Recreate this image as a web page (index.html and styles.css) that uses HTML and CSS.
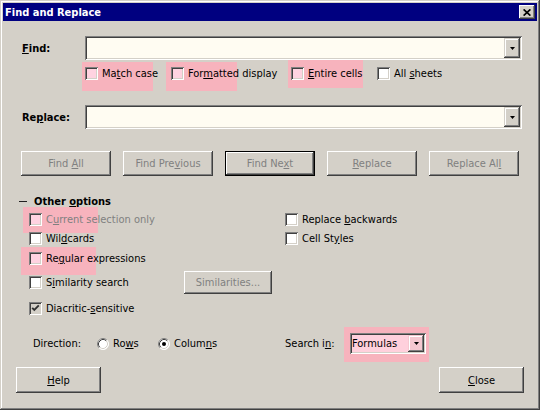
FILE: index.html
```html
<!DOCTYPE html>
<html>
<head>
<meta charset="utf-8">
<title>Find and Replace</title>
<link rel="stylesheet" href="styles.css">
</head>
<body>
<div class="window">
  <div class="titlebar">
    <span class="title">Find and Replace</span>
    <span class="tb-btn"><svg width="8" height="7" viewBox="0 0 8 7"><path d="M0.6 0.4 L7.4 6.6 M7.4 0.4 L0.6 6.6" stroke="#000" stroke-width="1.7" fill="none"/></svg></span>
  </div>
  <div class="content">
    <div class="field-row find-row">
      <span class="field-label"><u>F</u>ind:</span>
      <div class="combo"><span class="dd"><svg width="5" height="3" viewBox="0 0 5 3"><polygon points="0,0 5,0 2.5,3" fill="#000"/></svg></span></div>
    </div>
    <div class="opt-row">
      <span class="cb-item w-match hl hl-match"><span class="cb pink"></span><span>Ma<u>t</u>ch case</span></span>
      <span class="cb-item w-fmt hl hl-fmt"><span class="cb pink"></span><span>For<u>m</u>atted display</span></span>
      <span class="cb-item w-entire hl hl-entire"><span class="cb pink"></span><span><u>E</u>ntire cells</span></span>
      <span class="cb-item"><span class="cb"></span><span>All <u>s</u>heets</span></span>
    </div>
    <div class="field-row replace-row">
      <span class="field-label">Re<u>p</u>lace:</span>
      <div class="combo"><span class="dd"><svg width="5" height="3" viewBox="0 0 5 3"><polygon points="0,0 5,0 2.5,3" fill="#000"/></svg></span></div>
    </div>
    <div class="btn-row">
      <span class="btn disabled"><span>Find <u>A</u>ll</span></span>
      <span class="btn disabled"><span>Find Pre<u>v</u>ious</span></span>
      <span class="btn default disabled"><span>Find Ne<u>x</u>t</span></span>
      <span class="btn disabled"><span><u>R</u>eplace</span></span>
      <span class="btn disabled"><span>Replace Al<u>l</u></span></span>
    </div>
    <div class="other-head"><span class="dash"></span><span class="head-text">Other <u>o</u>ptions</span></div>
    <div class="other-grid">
      <div class="col">
        <span class="cb-item hl hl-cur disabled"><span class="cb pink"></span><span>C<u>u</u>rrent selection only</span></span>
        <span class="cb-item r2"><span class="cb"></span><span>Wil<u>d</u>cards</span></span>
        <span class="cb-item r3 hl hl-reg"><span class="cb pink"></span><span>Re<u>g</u>ular expressions</span></span>
        <div class="sim-row">
          <span class="cb-item w-sim"><span class="cb"></span><span>S<u>i</u>milarity search</span></span>
          <span class="btn sim disabled"><span>Similarities...</span></span>
        </div>
        <span class="cb-item r5"><span class="cb checked"><svg width="13" height="13" viewBox="0 0 13 13"><path d="M3.2 5.8 L5.3 7.9 L9.8 3.4" stroke="#303030" stroke-width="1.9" fill="none"/></svg></span><span>Diacritic-<u>s</u>ensitive</span></span>
      </div>
      <div class="col">
        <span class="cb-item"><span class="cb"></span><span>Replace <u>b</u>ackwards</span></span>
        <span class="cb-item r2"><span class="cb"></span><span>Cell St<u>y</u>les</span></span>
      </div>
    </div>
    <div class="dir-row">
      <span class="dir-label">Direction:</span>
      <span class="radio-item w-rows"><svg width="12" height="12" viewBox="0 0 12 12"><circle cx="6" cy="6" r="5.5" fill="#fff"/><path d="M2.11 9.89 A5.5 5.5 0 0 1 9.89 2.11" stroke="#808080" fill="none"/><path d="M9.89 2.11 A5.5 5.5 0 0 1 2.11 9.89" stroke="#fff" fill="none"/><path d="M2.82 9.18 A4.5 4.5 0 0 1 9.18 2.82" stroke="#404040" fill="none"/><path d="M9.18 2.82 A4.5 4.5 0 0 1 2.82 9.18" stroke="#d4d0c8" fill="none"/></svg><span>Ro<u>w</u>s</span></span>
      <span class="radio-item w-cols"><svg width="12" height="12" viewBox="0 0 12 12"><circle cx="6" cy="6" r="5.5" fill="#fff"/><path d="M2.11 9.89 A5.5 5.5 0 0 1 9.89 2.11" stroke="#808080" fill="none"/><path d="M9.89 2.11 A5.5 5.5 0 0 1 2.11 9.89" stroke="#fff" fill="none"/><path d="M2.82 9.18 A4.5 4.5 0 0 1 9.18 2.82" stroke="#404040" fill="none"/><path d="M9.18 2.82 A4.5 4.5 0 0 1 2.82 9.18" stroke="#d4d0c8" fill="none"/><circle cx="6" cy="6" r="2" fill="#000"/></svg><span>Colum<u>n</u>s</span></span>
      <span class="search-label">Search i<u>n</u>:</span>
      <span class="listbox-wrap hl hl-list"><span class="listbox"><span class="lb-text">Formulas</span><span class="dd pinkdd"><svg width="5" height="3" viewBox="0 0 5 3"><polygon points="0,0 5,0 2.5,3" fill="#000"/></svg></span></span></span>
    </div>
    <div class="bottom-row">
      <span class="btn big"><span><u>H</u>elp</span></span>
      <span class="btn big"><span><u>C</u>lose</span></span>
    </div>
  </div>
</div>
</body>
</html>
```
FILE: styles.css
```css
* { box-sizing: border-box; }
html, body { margin: 0; padding: 0; }
body {
  width: 540px;
  height: 410px;
  overflow: hidden;
  background: #d4d0c8;
  font-family: "DejaVu Sans Condensed", "DejaVu Sans", sans-serif;
  font-size: 11px;
  line-height: 13px;
  color: #000;
}
u { text-decoration: underline; text-underline-offset: 1px; }
.window {
  width: 540px;
  height: 410px;
  padding: 3px;
  background: #d4d0c8;
  box-shadow: inset -1px -1px #404040, inset 1px 1px #d4d0c8, inset -2px -2px #808080, inset 2px 2px #fff;
  display: flex;
  flex-direction: column;
}
.titlebar {
  height: 18px;
  background: #000080;
  color: #fff;
  display: flex;
  align-items: center;
  justify-content: space-between;
  padding: 0 2px 0 2px;
  flex: none;
}
.title { font-weight: bold; }
.tb-btn {
  width: 16px;
  height: 14px;
  background: #d4d0c8;
  box-shadow: inset -1px -1px #404040, inset 1px 1px #fff, inset -2px -2px #808080, inset 2px 2px #d4d0c8;
  display: flex;
  align-items: center;
  justify-content: center;
  padding-right: 1px;
}
.tb-btn svg { display: block; }
.content { flex: 1; display: flex; flex-direction: column; }

.field-row {
  display: flex;
  align-items: center;
  height: 24px;
  padding-left: 19px;
  padding-right: 15px;
}
.find-row { margin-top: 15px; }
.replace-row { margin-top: 25px; }
.field-label { width: 63px; font-weight: bold; flex: none; }
.combo {
  flex: 1;
  height: 24px;
  background: #fffcf2;
  box-shadow: inset 1px 1px #808080, inset -1px -1px #fff, inset 2px 2px #404040, inset -2px -2px #d4d0c8;
  padding: 2px;
  display: flex;
  justify-content: flex-end;
}
.dd {
  width: 16px;
  height: 100%;
  background: #d4d0c8;
  box-shadow: inset -1px -1px #404040, inset 1px 1px #d4d0c8, inset -2px -2px #808080, inset 2px 2px #fff;
  display: flex;
  align-items: center;
  justify-content: center;
  flex: none;
}
.dd svg { display: block; }

.opt-row {
  display: flex;
  margin: 7px 0 0 82px;
  height: 13px;
}
.cb-item {
  display: flex;
  align-items: center;
  gap: 4px;
  height: 13px;
  position: relative;
  isolation: isolate;
  white-space: nowrap;
  flex: none;
}
.cb-item.disabled { color: #808080; }
.w-match { width: 86px; }
.w-fmt { width: 120px; }
.w-entire { width: 86px; }
.cb {
  width: 13px;
  height: 13px;
  background: #fff;
  box-shadow: inset 1px 1px #808080, inset -1px -1px #fff, inset 2px 2px #404040, inset -2px -2px #d4d0c8;
  flex: none;
}
.cb.pink { background: #ffd3e1; }
.cb.checked { background: #d4d0c8; }
.cb svg { display: block; }

.hl::before {
  content: "";
  position: absolute;
  z-index: -1;
  background: #f7b3bd;
}
.hl-match::before { left: -3px; top: -5px; width: 71px; height: 29px; }
.hl-fmt::before { left: -5px; top: -5px; width: 71px; height: 29px; }
.hl-entire::before { left: -3px; top: -7px; width: 75px; height: 28px; }
.hl-cur::before { left: -6px; top: -6px; width: 75px; height: 26px; }
.hl-reg::before { left: -8px; top: -5px; width: 75px; height: 28px; }
.hl-list::before { left: -6px; top: -6px; width: 85px; height: 35px; }

.btn-row {
  display: flex;
  gap: 12px;
  margin: 22px 0 0 18px;
}
.btn {
  width: 90px;
  height: 25px;
  display: flex;
  align-items: center;
  justify-content: center;
  background: #d4d0c8;
  box-shadow: inset -1px -1px #404040, inset 1px 1px #fff, inset -2px -2px #808080, inset 2px 2px #d4d0c8;
  white-space: nowrap;
  flex: none;
}
.btn.disabled { color: #808080; }
.btn.default {
  border: 1px solid #000;
  box-shadow: inset -1px -1px #404040, inset 1px 1px #fff, inset -2px -2px #808080;
}

.other-head {
  display: flex;
  align-items: center;
  height: 13px;
  margin: 19px 0 0 16px;
}
.dash { width: 8px; height: 1px; background: #202020; margin-right: 7px; }
.head-text { font-weight: bold; }

.other-grid {
  display: grid;
  grid-template-columns: 256px 1fr;
  margin: 5px 0 0 26px;
}
.col { display: flex; flex-direction: column; align-items: flex-start; }
.r2 { margin-top: 6px; }
.r3 { margin-top: 7px; }
.r5 { margin-top: 8px; }
.sim-row {
  display: flex;
  align-items: center;
  height: 23px;
  margin-top: 6px;
}
.w-sim { width: 155px; }
.btn.sim { width: 88px; height: 23px; }

.dir-row {
  display: flex;
  align-items: center;
  height: 21px;
  margin: 18px 0 0 30px;
}
.dir-label { width: 64px; flex: none; }
.radio-item { display: flex; align-items: center; gap: 4px; flex: none; }
.radio-item svg { display: block; }
.w-rows { width: 61px; }
.w-cols { width: 127px; }
.search-label { width: 65px; flex: none; }
.listbox-wrap { position: relative; isolation: isolate; display: block; }
.listbox {
  width: 76px;
  height: 21px;
  display: flex;
  align-items: center;
  justify-content: space-between;
  padding: 2px;
  background: #ffd0dc;
  box-shadow: inset 1px 1px #808080, inset -1px -1px #fff, inset 2px 2px #404040, inset -2px -2px #d4d0c8;
}
.lb-text { padding-left: 0; }
.dd.pinkdd {
  background: #f5c8d0;
  height: 17px;
  box-shadow: inset -1px -1px #404040, inset 1px 1px #f5c8d0, inset -2px -2px #808080, inset 2px 2px #fff;
}

.bottom-row {
  display: flex;
  justify-content: space-between;
  padding: 0 13px;
  margin-top: 13px;
}
.btn.big { width: 85px; height: 26px; }
```
